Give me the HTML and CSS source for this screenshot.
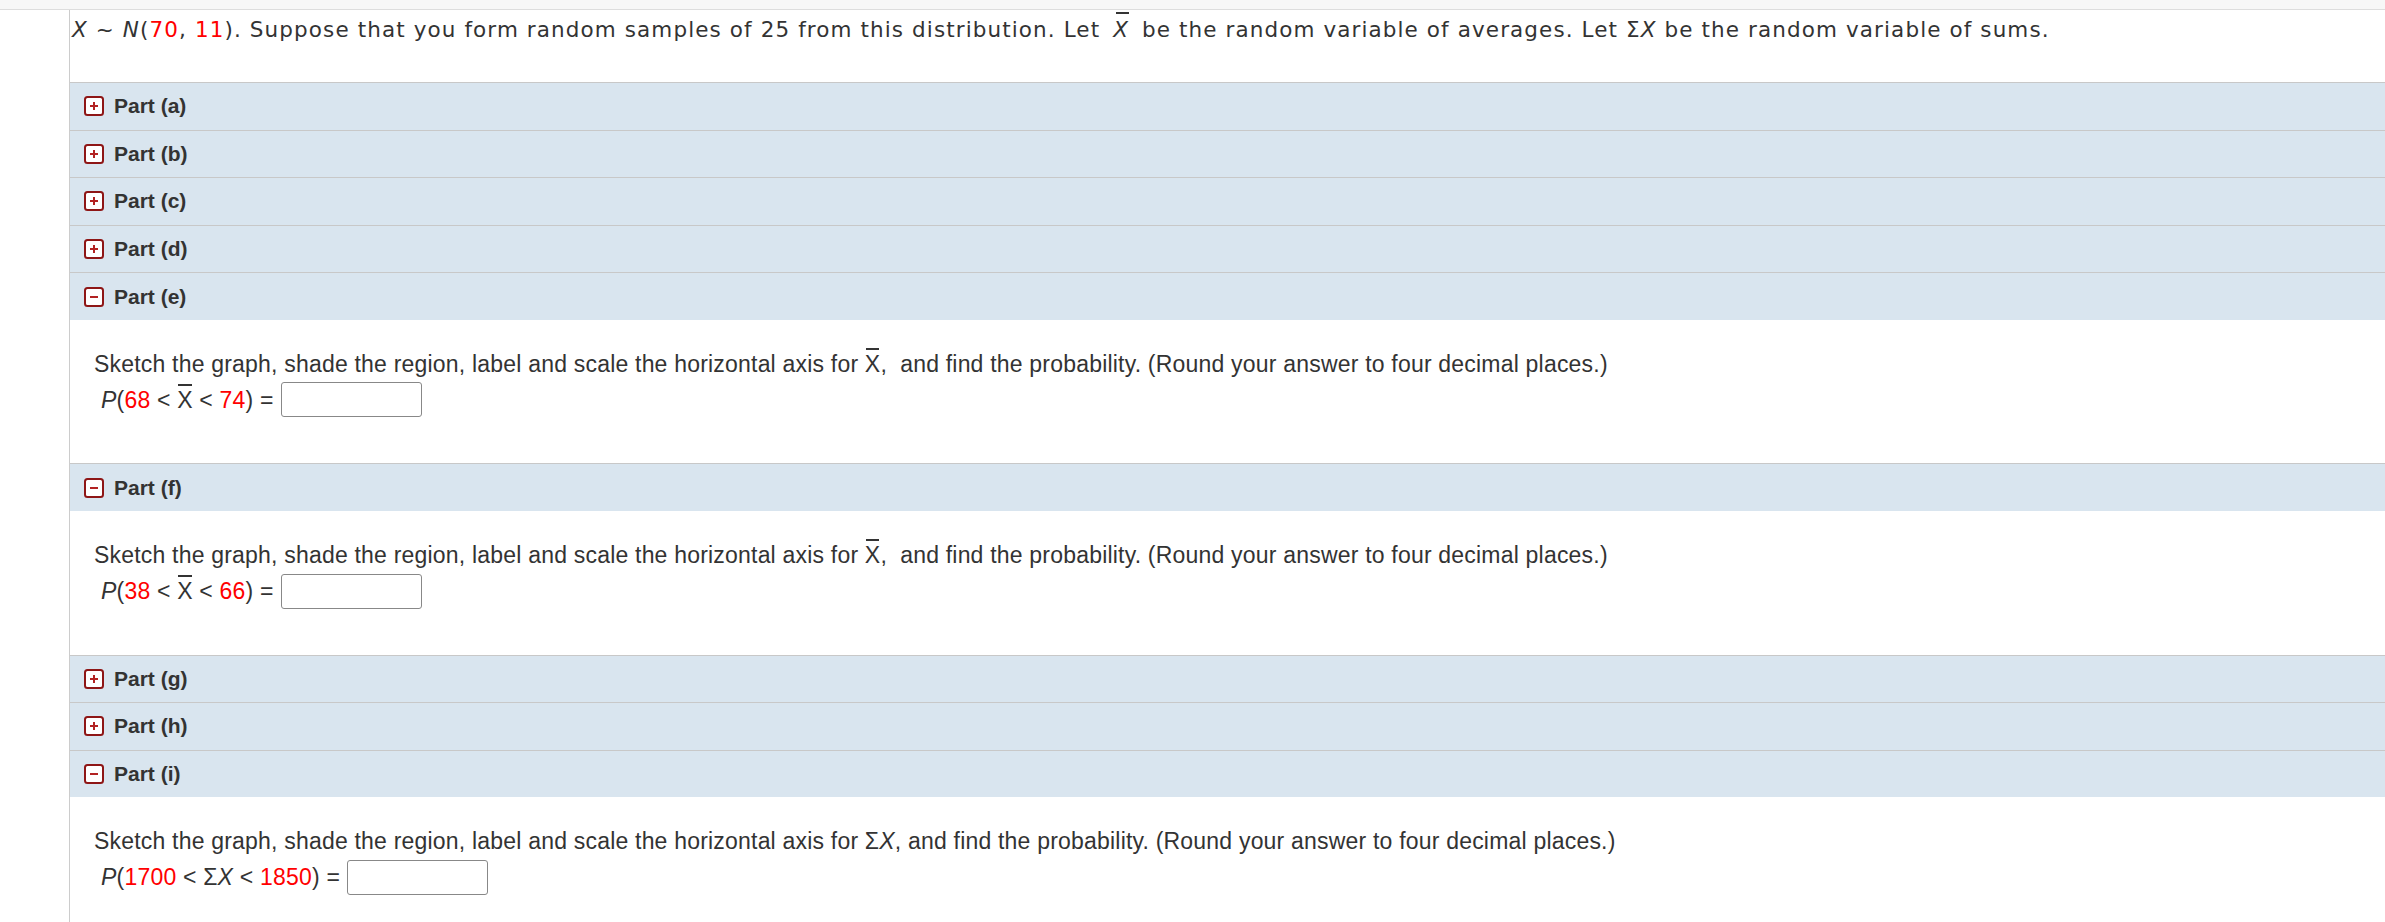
FILE: index.html
```html
<!DOCTYPE html>
<html lang="en">
<head>
    <meta charset="UTF-8">
    <meta name="viewport" content="width=device-width, initial-scale=1.0">
    <title>Sampling Distribution</title>
    <link rel="stylesheet" href="styles.css">
</head>
<body>
    <div class="topbar"></div>
    <div class="question">
        <div class="intro">
            <i>X</i> ~ <i>N</i>(<span class="red">70</span>, <span class="red">11</span>). Suppose that you form random samples of 25 from this distribution. Let <span class="xbar"><i>X</i></span> be the random variable of averages. Let &Sigma;<i>X</i> be the random variable of sums.
        </div>

        <div class="part">
            <svg class="toggle" viewBox="0 0 20 20"><rect x="1" y="1" width="18" height="18" rx="2.5"/><path d="M6 10h8M10 6v8"/></svg>
            Part (a)
        </div>
        <div class="part">
            <svg class="toggle" viewBox="0 0 20 20"><rect x="1" y="1" width="18" height="18" rx="2.5"/><path d="M6 10h8M10 6v8"/></svg>
            Part (b)
        </div>
        <div class="part">
            <svg class="toggle" viewBox="0 0 20 20"><rect x="1" y="1" width="18" height="18" rx="2.5"/><path d="M6 10h8M10 6v8"/></svg>
            Part (c)
        </div>
        <div class="part">
            <svg class="toggle" viewBox="0 0 20 20"><rect x="1" y="1" width="18" height="18" rx="2.5"/><path d="M6 10h8M10 6v8"/></svg>
            Part (d)
        </div>
        <div class="part">
            <svg class="toggle" viewBox="0 0 20 20"><rect x="1" y="1" width="18" height="18" rx="2.5"/><path d="M6 10h8"/></svg>
            Part (e)
        </div>
        <div class="part-body">
            <div class="prompt">Sketch the graph, shade the region, label and scale the horizontal axis for&nbsp;<span class="xbar">X</span>,&nbsp; and find the probability. (Round your answer to four decimal places.)</div>
            <div class="answer">
                <span><i>P</i>(<span class="red">68</span> &lt; <span class="xbar">X</span> &lt; <span class="red">74</span>) =</span>
                <input class="answer-box" type="text">
            </div>
        </div>

        <div class="part">
            <svg class="toggle" viewBox="0 0 20 20"><rect x="1" y="1" width="18" height="18" rx="2.5"/><path d="M6 10h8"/></svg>
            Part (f)
        </div>
        <div class="part-body">
            <div class="prompt">Sketch the graph, shade the region, label and scale the horizontal axis for&nbsp;<span class="xbar">X</span>,&nbsp; and find the probability. (Round your answer to four decimal places.)</div>
            <div class="answer">
                <span><i>P</i>(<span class="red">38</span> &lt; <span class="xbar">X</span> &lt; <span class="red">66</span>) =</span>
                <input class="answer-box" type="text">
            </div>
        </div>

        <div class="part">
            <svg class="toggle" viewBox="0 0 20 20"><rect x="1" y="1" width="18" height="18" rx="2.5"/><path d="M6 10h8M10 6v8"/></svg>
            Part (g)
        </div>
        <div class="part">
            <svg class="toggle" viewBox="0 0 20 20"><rect x="1" y="1" width="18" height="18" rx="2.5"/><path d="M6 10h8M10 6v8"/></svg>
            Part (h)
        </div>
        <div class="part">
            <svg class="toggle" viewBox="0 0 20 20"><rect x="1" y="1" width="18" height="18" rx="2.5"/><path d="M6 10h8"/></svg>
            Part (i)
        </div>
        <div class="part-body">
            <div class="prompt">Sketch the graph, shade the region, label and scale the horizontal axis for &Sigma;<i>X</i>, and find the probability. (Round your answer to four decimal places.)</div>
            <div class="answer">
                <span><i>P</i>(<span class="red">1700</span> &lt; &Sigma;<i>X</i> &lt; <span class="red">1850</span>) =</span>
                <input class="answer-box" type="text">
            </div>
        </div>
    </div>
</body>
</html>
```

FILE: styles.css
```css
body {
    margin: 0;
    background: #ffffff;
    color: #333333;
    font-family: 'Liberation Sans', Arial, sans-serif;
    overflow: hidden;
}

.topbar {
    height: 9px;
    background: #f7f7f7;
    border-bottom: 1px solid #dddddd;
}

.question {
    margin-left: 69px;
    border-left: 1px solid #cccccc;
    min-height: 920px;
}

.intro {
    font-family: 'DejaVu Sans', Verdana, sans-serif;
    font-size: 21.5px;
    letter-spacing: 1.1px;
    line-height: 26px;
    padding: 6.5px 0 39.5px 2px;
    white-space: nowrap;
}

.red {
    color: #ff0000;
}

.xbar {
    display: inline-block;
    position: relative;
}

.xbar::before {
    content: "";
    position: absolute;
    left: 1px;
    right: 1px;
    top: -3px;
    border-top: 2px solid #333333;
}

.intro .xbar {
    margin: 0 5px;
}

.intro .xbar::before {
    top: -5px;
    left: 3px;
    right: 0;
}

.part {
    display: flex;
    align-items: center;
    gap: 10px;
    height: 46.6px;
    padding-left: 14px;
    background: #d9e5ef;
    border-top: 1px solid #c8c8c8;
    font-size: 21px;
    font-weight: bold;
    color: #333333;
}

.toggle {
    width: 20px;
    height: 20px;
    flex-shrink: 0;
}

.toggle rect {
    fill: #ffffff;
    stroke: #8e1616;
    stroke-width: 2;
}

.toggle path {
    stroke: #b22222;
    stroke-width: 2;
    fill: none;
}

.part-body {
    padding: 31px 24px 46px;
    font-size: 23px;
    letter-spacing: 0.2px;
    line-height: 26px;
}

.prompt {
    white-space: nowrap;
}

.answer {
    display: flex;
    align-items: center;
    gap: 7px;
    margin-top: 5.5px;
    padding-left: 7px;
    white-space: nowrap;
}

.answer-box {
    box-sizing: border-box;
    width: 141px;
    height: 35px;
    margin: 0;
    border: 1px solid #888888;
    border-radius: 3px;
    background: #ffffff;
}
```
